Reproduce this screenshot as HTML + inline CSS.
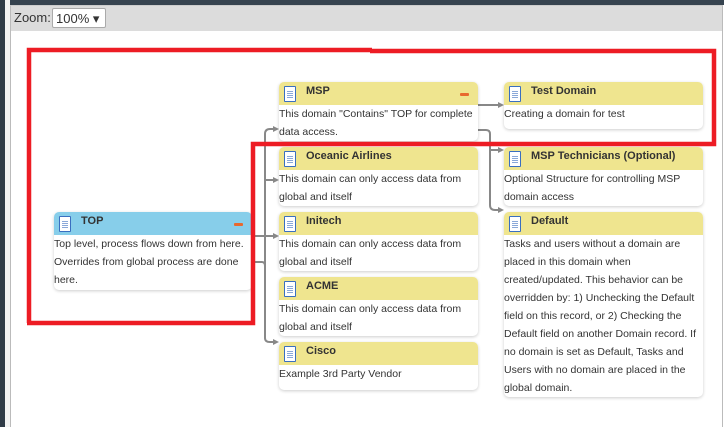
<!DOCTYPE html>
<html><head><meta charset="utf-8"><style>
*{margin:0;padding:0;box-sizing:border-box}
body{width:724px;height:427px;overflow:hidden;background:#fff;font-family:"Liberation Sans",Arial,sans-serif;position:relative}
.strip{position:absolute;left:0;top:0;width:5px;height:427px;background:#2f3b47}
.strip2{position:absolute;left:5px;top:0;width:5px;height:427px;background:#f2f2f2}
.topbar{position:absolute;left:0;top:0;width:724px;height:5px;background:#36434f}
.panel{position:absolute;left:10px;top:5px;width:713px;height:422px;border-left:1px solid #bbb;border-right:1px solid #bbb;border-top:1px solid #ccc;background:#fff}
.tool{position:absolute;left:0;top:0;width:100%;height:25px;background:#dcdcdc;font-size:13px;color:#333}
.tool .lbl{position:absolute;left:3px;top:4px}
.sel{position:absolute;left:41px;top:2px;width:54px;height:20px;background:#fff;border:1px solid #aaa;border-radius:2px;font-size:13px;padding:2px 0 0 3px}
.card{position:absolute;width:199px;background:#fff;border-radius:5px;box-shadow:0 1px 3px rgba(0,0,0,.2);font-size:10.5px;color:#333;overflow:hidden}
.hd{height:23px;background:#efe58f;position:relative;font-weight:bold;font-size:11px;padding:3px 0 0 27px}
.hd.b{background:#87ceea}
.bd{line-height:18px;white-space:normal}
.ic{position:absolute;left:5px;top:4px;width:12px;height:16px;border:1px solid #3a6fc0;background:#fff;border-radius:1px}
.ic:after{content:"";position:absolute;left:2px;top:4px;width:6px;height:7px;background:repeating-linear-gradient(#8aa8d8 0 1px,transparent 1px 2px)}
.min{position:absolute;right:9px;top:11px;width:9px;height:3px;background:#e8692f;border-radius:1px}
svg{position:absolute;left:0;top:0}
</style></head><body>
<div class="topbar"></div><div class="strip"></div><div class="strip2"></div>
<div class="panel"><div class="tool"><span class="lbl">Zoom:</span><div class="sel">100% ▾</div></div></div>

<svg width="724" height="427">
<g fill="none" stroke="#888" stroke-width="2">
<path d="M251 236 H276"/><path d="M251 262 H262 Q265 262 265 266 V338 Q265 342 270 342 H277"/>
<path d="M265 170 V134 Q265 129 270 129 H277"/><path d="M265 180 H277"/><path d="M265 150 V270"/>
<path d="M478 105 H502"/><path d="M478 130 H486 Q490 130 490 134 V205 Q490 210 495 210 H502"/>
<path d="M490 150 H502"/>
</g>
<g fill="#888"><path d="M279 236 l-6 -3 v6z"/><path d="M279 342 l-6 -3 v6z"/><path d="M279 129 l-6 -3 v6z"/><path d="M279 180 l-6 -3 v6z"/><path d="M504 105 l-6 -3 v6z"/><path d="M504 210 l-6 -3 v6z"/><path d="M504 150 l-6 -3 v6z"/></g>
</svg>

<div class="card" style="left:279px;top:82px;height:59px"><div class="hd"><i class="ic"></i>MSP<i class="min"></i></div><div class="bd">This domain "Contains" TOP for complete data access.</div></div>
<div class="card" style="left:279px;top:147px;height:59px"><div class="hd"><i class="ic"></i>Oceanic Airlines</div><div class="bd">This domain can only access data from global and itself</div></div>
<div class="card" style="left:279px;top:212px;height:59px"><div class="hd"><i class="ic"></i>Initech</div><div class="bd">This domain can only access data from global and itself</div></div>
<div class="card" style="left:279px;top:277px;height:59px"><div class="hd"><i class="ic"></i>ACME</div><div class="bd">This domain can only access data from global and itself</div></div>
<div class="card" style="left:279px;top:342px;height:48px"><div class="hd"><i class="ic"></i>Cisco</div><div class="bd">Example 3rd Party Vendor</div></div>
<div class="card" style="left:504px;top:82px;height:47px"><div class="hd"><i class="ic"></i>Test Domain</div><div class="bd">Creating a domain for test</div></div>
<div class="card" style="left:504px;top:147px;height:59px"><div class="hd"><i class="ic"></i>MSP Technicians (Optional)</div><div class="bd">Optional Structure for controlling MSP domain access</div></div>
<div class="card" style="left:504px;top:212px;height:185px"><div class="hd"><i class="ic"></i>Default</div><div class="bd">Tasks and users without a domain are placed in this domain when created/updated. This behavior can be overridden by: 1) Unchecking the Default field on this record, or 2) Checking the Default field on another Domain record. If no domain is set as Default, Tasks and Users with no domain are placed in the global domain.</div></div>
<div class="card" style="left:54px;top:212px;width:198px;height:78px"><div class="hd b"><i class="ic"></i>TOP<i class="min"></i></div><div class="bd">Top level, process flows down from here. Overrides from global process are done here.</div></div>

<svg width="724" height="427">
<g fill="none" stroke="#ed1c24" stroke-width="4.5">
<path d="M29 323 V50 H372"/><path d="M370 51 H714 V144 H253 V323 H27"/>
</g>
</svg>
</body></html>
